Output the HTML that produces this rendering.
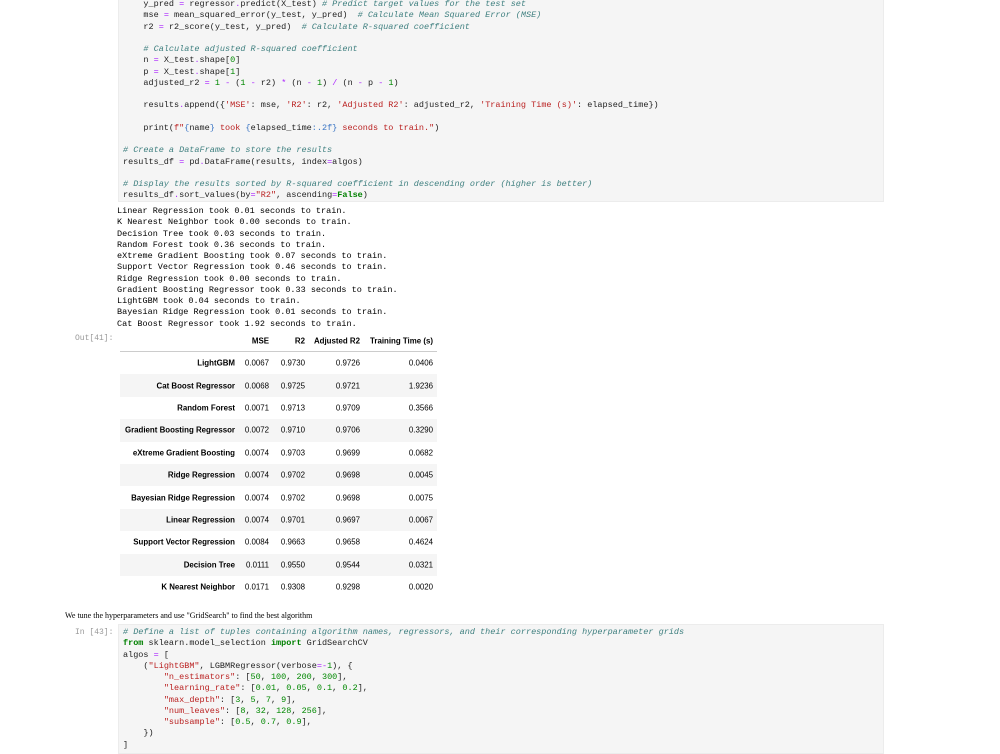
<!DOCTYPE html>
<html><head><meta charset="utf-8"><style>
*{margin:0;padding:0;box-sizing:border-box}
body{width:1000px;height:750px;background:#fff;position:relative;overflow:hidden;font-family:"Liberation Mono",monospace;color:#333}
.cell{position:absolute;left:118px;width:766px;background:#f5f5f5;border:1px solid #ececec}
pre{position:absolute;font-family:"Liberation Mono",monospace;font-size:8.5px;line-height:11.25px;white-space:pre;color:#222}
.c{color:#408080;font-style:italic}.s{color:#ba2121}.k{color:#008000;font-weight:bold}.n{color:#080}.o{color:#a2f}.b{color:#3a75c4}
.p{position:absolute;font-size:8px;color:#999}
.tbl{position:absolute;left:120px;top:330px;width:317px;font-family:"Liberation Sans",sans-serif;font-size:7.9px;color:#000}
.r{position:absolute;left:0;width:317px;height:22.4px}
.r span{position:absolute;top:50%;transform:translateY(-50%);text-align:right;white-space:nowrap}
.g{background:#f5f5f5}
</style></head><body>
<div class="cell" style="top:-2px;height:204px"></div>
<pre style="left:123px;top:-1px">    y_pred <span class="o">=</span> regressor<span class="o">.</span>predict(X_test) <span class="c"># Predict target values for the test set</span>
    mse <span class="o">=</span> mean_squared_error(y_test, y_pred)  <span class="c"># Calculate Mean Squared Error (MSE)</span>
    r2 <span class="o">=</span> r2_score(y_test, y_pred)  <span class="c"># Calculate R-squared coefficient</span>

    <span class="c"># Calculate adjusted R-squared coefficient</span>
    n <span class="o">=</span> X_test<span class="o">.</span>shape[<span class="n">0</span>]
    p <span class="o">=</span> X_test<span class="o">.</span>shape[<span class="n">1</span>]
    adjusted_r2 <span class="o">=</span> <span class="n">1</span> <span class="o">-</span> (<span class="n">1</span> <span class="o">-</span> r2) <span class="o">*</span> (n <span class="o">-</span> <span class="n">1</span>) <span class="o">/</span> (n <span class="o">-</span> p <span class="o">-</span> <span class="n">1</span>)

    results<span class="o">.</span>append({<span class="s">'MSE'</span>: mse, <span class="s">'R2'</span>: r2, <span class="s">'Adjusted R2'</span>: adjusted_r2, <span class="s">'Training Time (s)'</span>: elapsed_time})

    print(<span class="s">f"</span><span class="b">{</span>name<span class="b">}</span><span class="s"> took </span><span class="b">{</span>elapsed_time<span class="b">:.2f}</span><span class="s"> seconds to train."</span>)

<span class="c"># Create a DataFrame to store the results</span>
results_df <span class="o">=</span> pd<span class="o">.</span>DataFrame(results, index<span class="o">=</span>algos)

<span class="c"># Display the results sorted by R-squared coefficient in descending order (higher is better)</span>
results_df<span class="o">.</span>sort_values(by<span class="o">=</span><span class="s">"R2"</span>, ascending<span class="o">=</span><span class="k">False</span>)</pre>
<pre style="left:117px;top:206px;color:#000">Linear Regression took 0.01 seconds to train.
K Nearest Neighbor took 0.00 seconds to train.
Decision Tree took 0.03 seconds to train.
Random Forest took 0.36 seconds to train.
eXtreme Gradient Boosting took 0.07 seconds to train.
Support Vector Regression took 0.46 seconds to train.
Ridge Regression took 0.00 seconds to train.
Gradient Boosting Regressor took 0.33 seconds to train.
LightGBM took 0.04 seconds to train.
Bayesian Ridge Regression took 0.01 seconds to train.
Cat Boost Regressor took 1.92 seconds to train.</pre>
<div class="p" style="left:75px;top:334px">Out[41]:</div>
<div class="tbl">
<div class="r" style="top:0;font-weight:bold;border-bottom:1px solid #ccc;height:22px"><span style="right:168px">MSE</span><span style="right:132px">R2</span><span style="right:77px">Adjusted R2</span><span style="right:4px">Training Time (s)</span></div>
<div class="r" style="top:22px"><span style="right:202px;font-weight:bold">LightGBM</span><span style="right:168px">0.0067</span><span style="right:132px">0.9730</span><span style="right:77px">0.9726</span><span style="right:4px">0.0406</span></div>
<div class="r g" style="top:44.4px"><span style="right:202px;font-weight:bold">Cat Boost Regressor</span><span style="right:168px">0.0068</span><span style="right:132px">0.9725</span><span style="right:77px">0.9721</span><span style="right:4px">1.9236</span></div>
<div class="r" style="top:66.8px"><span style="right:202px;font-weight:bold">Random Forest</span><span style="right:168px">0.0071</span><span style="right:132px">0.9713</span><span style="right:77px">0.9709</span><span style="right:4px">0.3566</span></div>
<div class="r g" style="top:89.2px"><span style="right:202px;font-weight:bold">Gradient Boosting Regressor</span><span style="right:168px">0.0072</span><span style="right:132px">0.9710</span><span style="right:77px">0.9706</span><span style="right:4px">0.3290</span></div>
<div class="r" style="top:111.6px"><span style="right:202px;font-weight:bold">eXtreme Gradient Boosting</span><span style="right:168px">0.0074</span><span style="right:132px">0.9703</span><span style="right:77px">0.9699</span><span style="right:4px">0.0682</span></div>
<div class="r g" style="top:134px"><span style="right:202px;font-weight:bold">Ridge Regression</span><span style="right:168px">0.0074</span><span style="right:132px">0.9702</span><span style="right:77px">0.9698</span><span style="right:4px">0.0045</span></div>
<div class="r" style="top:156.4px"><span style="right:202px;font-weight:bold">Bayesian Ridge Regression</span><span style="right:168px">0.0074</span><span style="right:132px">0.9702</span><span style="right:77px">0.9698</span><span style="right:4px">0.0075</span></div>
<div class="r g" style="top:178.8px"><span style="right:202px;font-weight:bold">Linear Regression</span><span style="right:168px">0.0074</span><span style="right:132px">0.9701</span><span style="right:77px">0.9697</span><span style="right:4px">0.0067</span></div>
<div class="r" style="top:201.2px"><span style="right:202px;font-weight:bold">Support Vector Regression</span><span style="right:168px">0.0084</span><span style="right:132px">0.9663</span><span style="right:77px">0.9658</span><span style="right:4px">0.4624</span></div>
<div class="r g" style="top:223.6px"><span style="right:202px;font-weight:bold">Decision Tree</span><span style="right:168px">0.0111</span><span style="right:132px">0.9550</span><span style="right:77px">0.9544</span><span style="right:4px">0.0321</span></div>
<div class="r" style="top:246px"><span style="right:202px;font-weight:bold">K Nearest Neighbor</span><span style="right:168px">0.0171</span><span style="right:132px">0.9308</span><span style="right:77px">0.9298</span><span style="right:4px">0.0020</span></div>
</div>
<div style="position:absolute;left:65px;top:611px;font-family:'Liberation Serif',serif;font-size:8px;color:#000">We tune the hyperparameters and use "GridSearch" to find the best algorithm</div>
<div class="cell" style="top:624px;height:130px"></div>
<div class="p" style="left:75px;top:628px">In [43]:</div>
<pre style="left:123px;top:627px"><span class="c"># Define a list of tuples containing algorithm names, regressors, and their corresponding hyperparameter grids</span>
<span class="k">from</span> sklearn.model_selection <span class="k">import</span> GridSearchCV
algos <span class="o">=</span> [
    (<span class="s">"LightGBM"</span>, LGBMRegressor(verbose<span class="o">=-</span><span class="n">1</span>), {
        <span class="s">"n_estimators"</span>: [<span class="n">50</span>, <span class="n">100</span>, <span class="n">200</span>, <span class="n">300</span>],
        <span class="s">"learning_rate"</span>: [<span class="n">0.01</span>, <span class="n">0.05</span>, <span class="n">0.1</span>, <span class="n">0.2</span>],
        <span class="s">"max_depth"</span>: [<span class="n">3</span>, <span class="n">5</span>, <span class="n">7</span>, <span class="n">9</span>],
        <span class="s">"num_leaves"</span>: [<span class="n">8</span>, <span class="n">32</span>, <span class="n">128</span>, <span class="n">256</span>],
        <span class="s">"subsample"</span>: [<span class="n">0.5</span>, <span class="n">0.7</span>, <span class="n">0.9</span>],
    })
]</pre>
</body></html>
